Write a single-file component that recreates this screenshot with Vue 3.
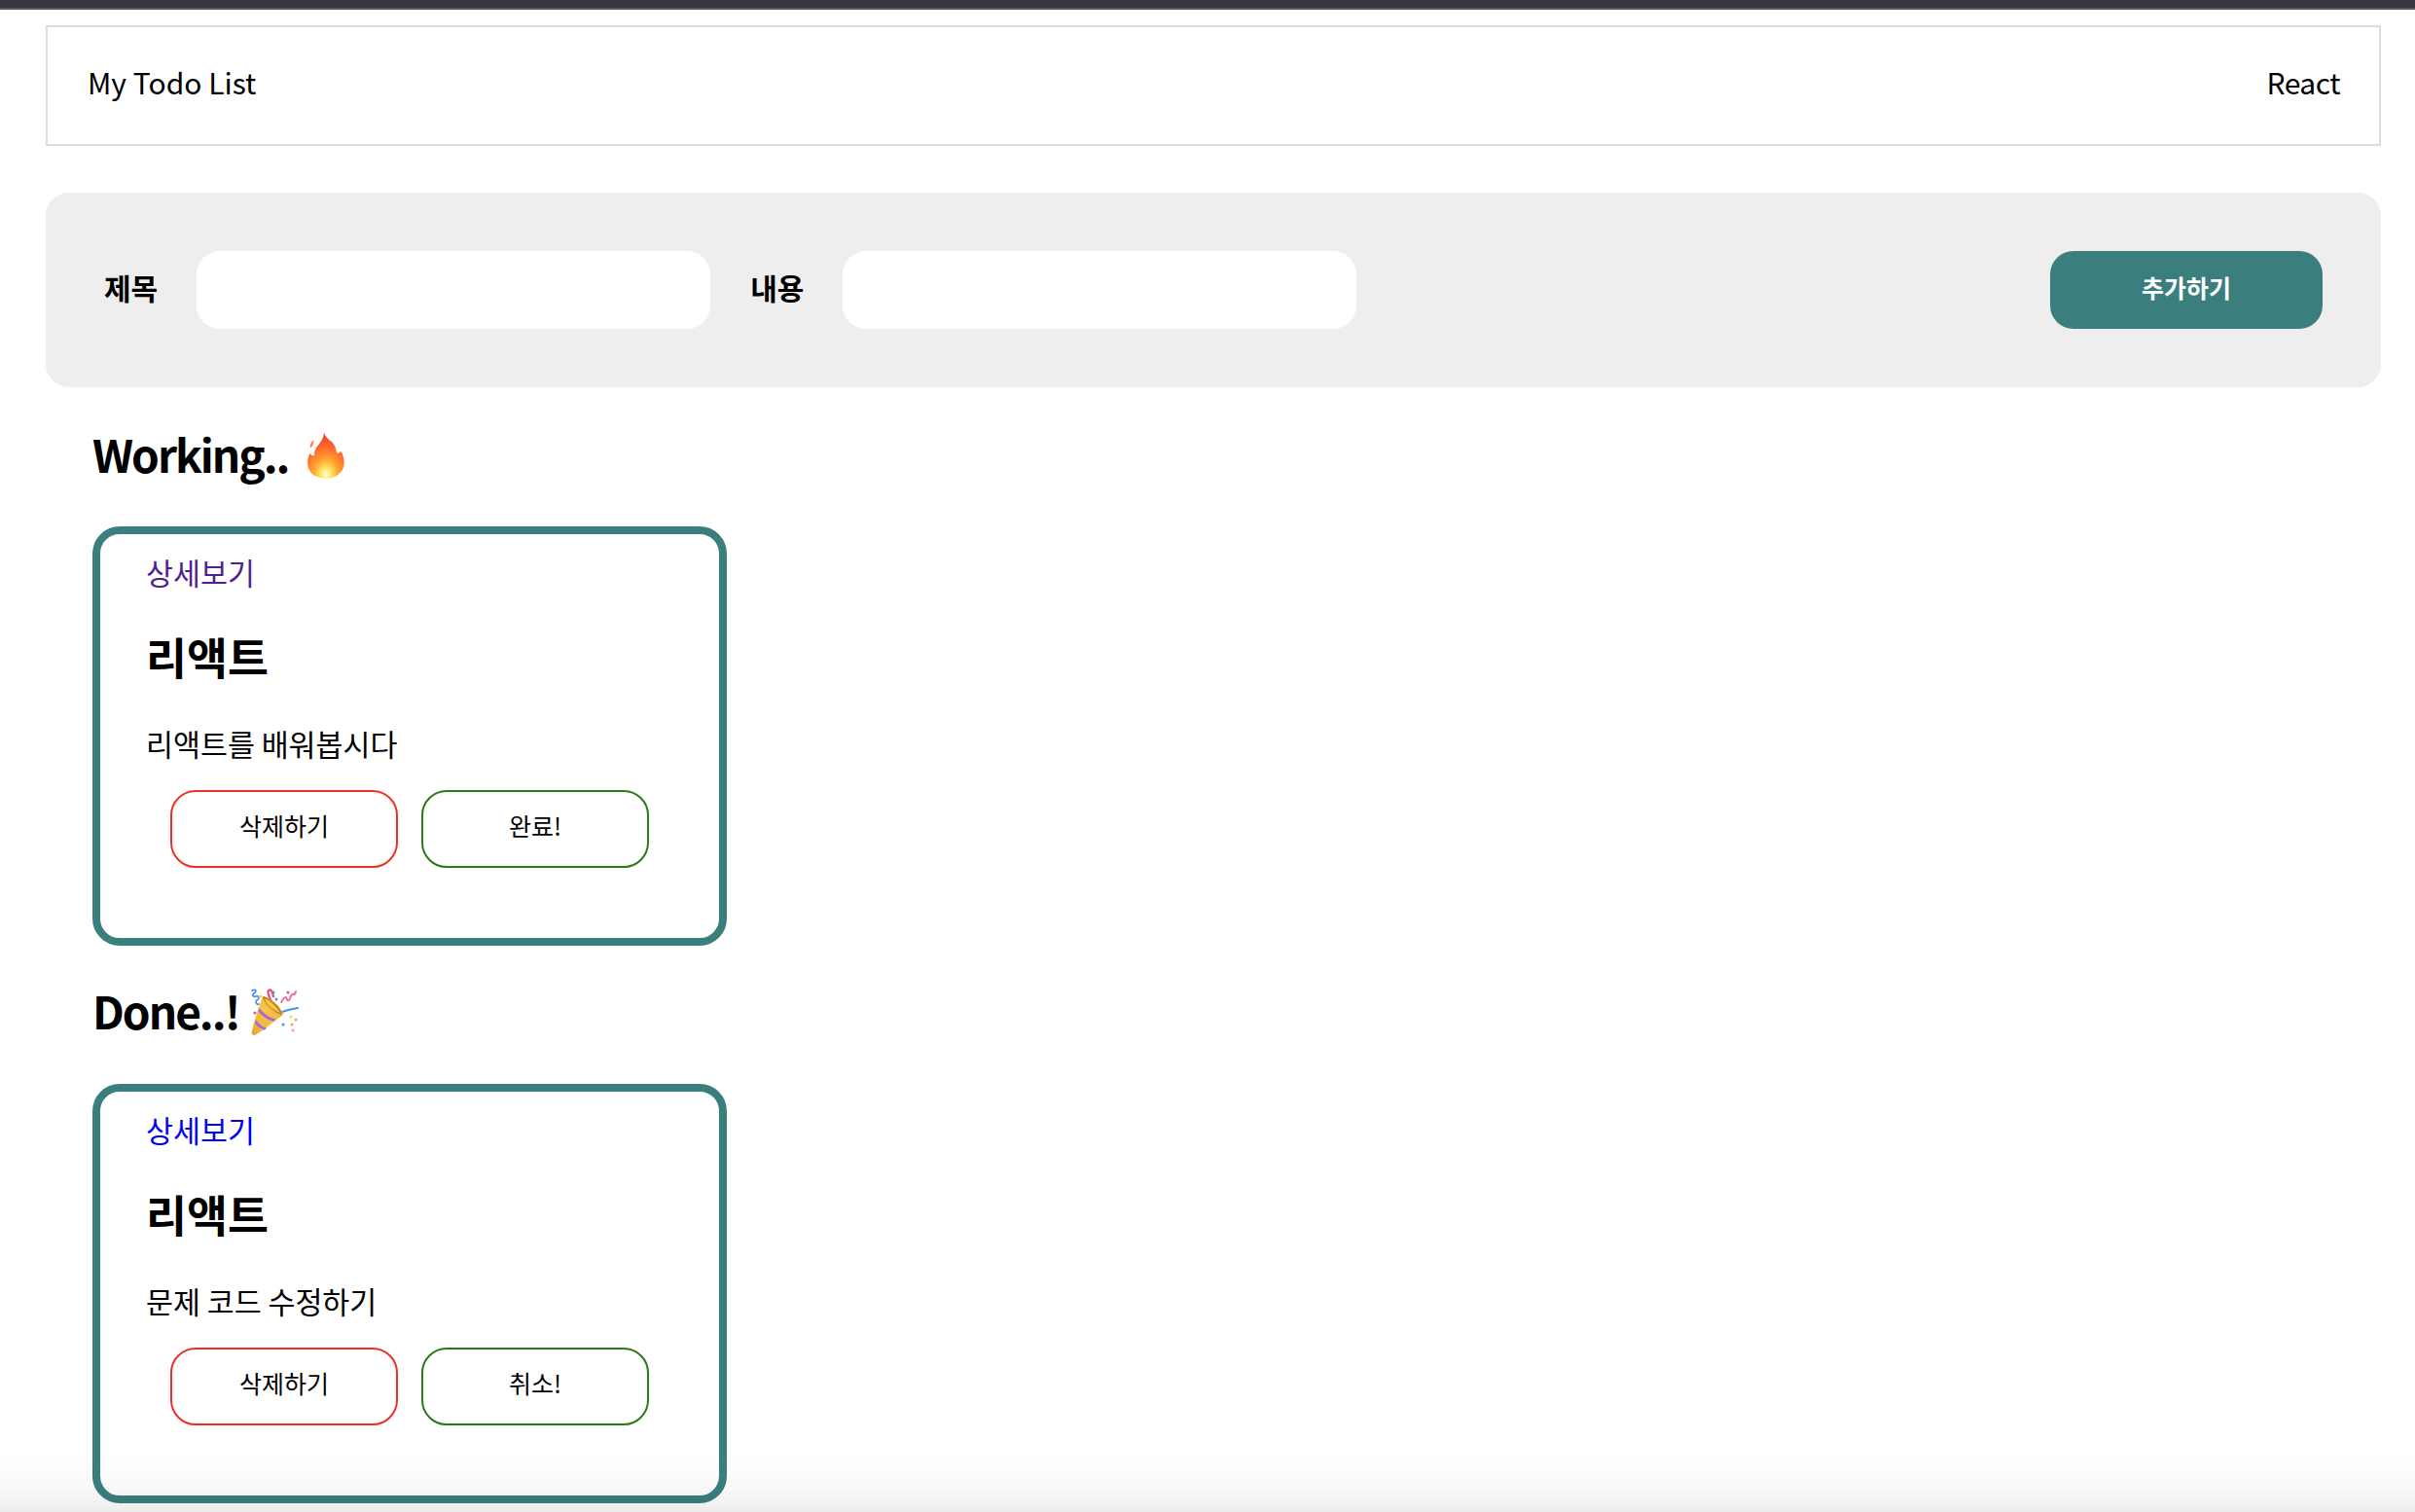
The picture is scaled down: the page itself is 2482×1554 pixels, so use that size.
<script setup>
const sections = [
  { title: 'Working..', icon: 'flame', cards: [{ link: 'visited', title: '리액트', body: '리액트를 배워봅시다', action: '완료!' }] },
  { title: 'Done..!', icon: 'popper', cards: [{ link: 'unvisited', title: '리액트', body: '문제 코드 수정하기', action: '취소!' }] },
]
</script>

<template>
  <div class="page">
    <div class="topbar"></div>
    <main class="layout">
      <header class="header">
        <div>My Todo List</div>
        <div class="tech">React</div>
      </header>

      <form class="form" @submit.prevent>
        <div class="fields">
          <label class="label">제목</label>
          <input class="input" type="text" />
          <label class="label second">내용</label>
          <input class="input" type="text" />
        </div>
        <button class="add" type="submit">추가하기</button>
      </form>

      <section v-for="s in sections" :key="s.title" class="section">
        <h2 class="heading" :class="s.icon">
          <span class="heading-text">{{ s.title }}</span>
          <svg v-if="s.icon === 'flame'" class="flame-icon" viewBox="0 0 38 48" aria-hidden="true">
            <defs>
              <radialGradient id="flameFill" cx="0.5" cy="0.92" r="0.85">
                <stop offset="0" stop-color="#fffbe0" />
                <stop offset="0.16" stop-color="#ffe96a" />
                <stop offset="0.38" stop-color="#ffa92e" />
                <stop offset="0.68" stop-color="#ff6f2c" />
                <stop offset="1" stop-color="#f0412a" />
              </radialGradient>
            </defs>
            <path fill="url(#flameFill)" d="M17 0C18 5 21 7 25 10C28 13 29.500 17 30 21C31 23 33 21 34.500 20C37 24 38 29 37.500 34C36.500 41 30 47 20 48C10 48 2 43 .5 35C-.5 29 1 25 2.500 22C4 24 5.500 25 7 24C7 17 10 15 12.500 11.500C15 8 17 5 17 0Z" />
            <path fill="#ff7a3d" d="M4.500 10C5.500 9 7 8 6.500 9.500C6 12 5 15 3 16.500C2.500 14.500 3 12 4.500 10Z" />
          </svg>
          <svg v-else class="popper-icon" viewBox="0 0 49 48" aria-hidden="true">
            <defs>
              <linearGradient id="coneFill" x1="0" y1="1" x2="1" y2="0">
                <stop offset="0" stop-color="#e5a83a" />
                <stop offset="0.55" stop-color="#f7c544" />
                <stop offset="1" stop-color="#e09a28" />
              </linearGradient>
            </defs>
            <path fill="none" stroke="#4f8ff0" stroke-width="1.800" stroke-linecap="round" d="M1 2C5 0 6 3 3 5C0 7 3 9 5 8C8 7 9 10 6 12C4 14 6 17 8 16" />
            <path fill="none" stroke="#ee4d7b" stroke-width="2.400" stroke-linecap="round" d="M21 14C19 9 16 4 18 2C20 0 22 3 23 8" />
            <path fill="none" stroke="#ef6a90" stroke-width="1.800" stroke-linecap="round" d="M31 14C33 11 34 8 36 9C37 11 37 13 39 12C41 10 40 6 43 6C45 6 46 5 46 3" />
            <path fill="none" stroke="#3f93f5" stroke-width="2.200" stroke-linecap="round" d="M26 26C33 23 41 21 48 20" />
            <path fill="url(#coneFill)" d="M12 8C20 9 31 18 33 27C26 32 14 42 4 48C1 48 0 46 1 43C4 32 8 18 12 8Z" />
            <path fill="#b9772c" d="M12.500 8C18 9 30 19 32 26.500C29 27 23 23 18 18C14 14 12 10 12.500 8Z" />
            <path fill="#f5c842" d="M14.500 10C19 12 27 19 30 25C26 24 21 20 18 17C15.500 14 14 12 14.500 10Z" />
            <path fill="#a868d8" d="M8.500 20C13 26 20 31 26 31.500L23 33.800C16.500 32 10 27 7.500 23.500Z" />
            <path fill="#a868d8" d="M4.800 32C7.500 36 12 40 16.500 40.500L13.500 42.800C9 41 5.500 38 4 35.500Z" />
            <circle cx="10" cy="8" r="1.500" fill="#f7d74a" />
            <circle cx="23" cy="4" r="1.500" fill="#4b8fe8" />
            <circle cx="26" cy="11" r="1.500" fill="#4b8fe8" />
            <circle cx="4" cy="25" r="1.600" fill="#e0558a" />
            <circle cx="38" cy="4" r="1.500" fill="#e0558a" />
            <circle cx="41" cy="29" r="1.500" fill="#f7d74a" />
            <circle cx="46" cy="32" r="1.600" fill="#f3a65a" />
            <circle cx="42" cy="37" r="1.500" fill="#f3a65a" />
            <circle cx="43" cy="43" r="1.500" fill="#ef9ab8" />
            <circle cx="33" cy="37" r="1.500" fill="#4b8fe8" />
          </svg>
        </h2>

        <article v-for="c in s.cards" :key="c.body" class="card">
          <a class="link" :class="c.link" href="#" @click.prevent>상세보기</a>
          <h3 class="card-title">{{ c.title }}</h3>
          <p class="card-body">{{ c.body }}</p>
          <div class="actions">
            <button class="btn delete" type="button">삭제하기</button>
            <button class="btn done" type="button">{{ c.action }}</button>
          </div>
        </article>
      </section>
    </main>
    <div class="bottom-shade"></div>
  </div>
</template>

<style>
html, body { margin: 0; background: #fff; overflow: hidden; }
</style>

<style scoped>
.page {
  position: relative;
  width: 2482px;
  height: 1554px;
  overflow: hidden;
  font-family: "Noto Sans CJK KR", "Noto Sans", sans-serif;
  color: #000;
}
.topbar {
  height: 8px;
  background: #36373c;
  border-bottom: 2px solid #5a5b60;
}
.layout {
  width: 2400px;
  margin: 16px 0 0 47px;
}
.header {
  box-sizing: border-box;
  height: 124px;
  border: 2px solid #ddd;
  padding: 0 40px 8px 41px;
  display: flex;
  align-items: center;
  justify-content: space-between;
  font-size: 30px;
}
.tech {
  letter-spacing: -0.5px;
}
.form {
  box-sizing: border-box;
  height: 200px;
  margin-top: 48px;
  padding: 60px;
  background: #eee;
  border-radius: 24px;
  display: flex;
  align-items: center;
  justify-content: space-between;
}
.fields {
  display: flex;
  align-items: center;
  gap: 40px;
}
.label {
  padding-bottom: 6px;
  font-size: 30px;
  font-weight: 700;
}
.second {
  margin-left: 1px;
}
.input {
  box-sizing: border-box;
  width: 528px;
  height: 80px;
  border: none;
  border-radius: 24px;
  background: #fff;
}
.add {
  box-sizing: border-box;
  width: 280px;
  height: 80px;
  padding: 0 0 6px;
  border: none;
  border-radius: 24px;
  background: #3a7f7e;
  color: #fff;
  font: 700 25px "Noto Sans CJK KR", sans-serif;
}
.section {
  padding-left: 48px;
}
.heading {
  height: 60px;
  display: flex;
  align-items: center;
  font-size: 46px;
  letter-spacing: -2px;
  font-weight: 700;
  line-height: 60px;
}
.heading.flame {
  margin: 40px 0 43px;
}
.heading.popper {
  margin: 38px 0 44px;
}
.heading-text {
  padding-bottom: 4px;
}
.flame-icon {
  width: 38px;
  height: 48px;
  margin-left: 19px;
}
.popper-icon {
  width: 49px;
  height: 48px;
  margin-left: 12px;
}
.card {
  box-sizing: border-box;
  width: 652px;
  height: 431px;
  border: 8px solid #3a7f7e;
  border-radius: 28px;
  padding: 19px 47px 0;
}
.link {
  display: block;
  font-size: 30.4px;
  line-height: 40px;
  text-decoration: none;
}
.visited { color: #4f2090; }
.unvisited { color: #0000f5; }
.card-title {
  margin: 41px 0 0;
  font-size: 45.6px;
  line-height: 50px;
  font-weight: 700;
}
.card-body {
  margin: 45px 0 0;
  font-size: 30.4px;
  line-height: 40px;
}
.actions {
  margin: 28px 0 0 25px;
  display: flex;
  gap: 24px;
}
.btn {
  box-sizing: border-box;
  width: 234px;
  height: 80px;
  padding: 0 0 8px;
  background: #fff;
  border-radius: 26px;
  border: 2px solid;
  color: #000;
  font: 400 25px "Noto Sans CJK KR", sans-serif;
}
.delete { border-color: #ee3124; }
.done { border-color: #2b7a15; }
.bottom-shade {
  position: absolute;
  left: 0;
  right: 0;
  bottom: 0;
  height: 60px;
  background: linear-gradient(to bottom, rgba(0, 0, 0, 0), rgba(0, 0, 0, 0.025) 60%, rgba(0, 0, 0, 0.07));
  pointer-events: none;
}
</style>
